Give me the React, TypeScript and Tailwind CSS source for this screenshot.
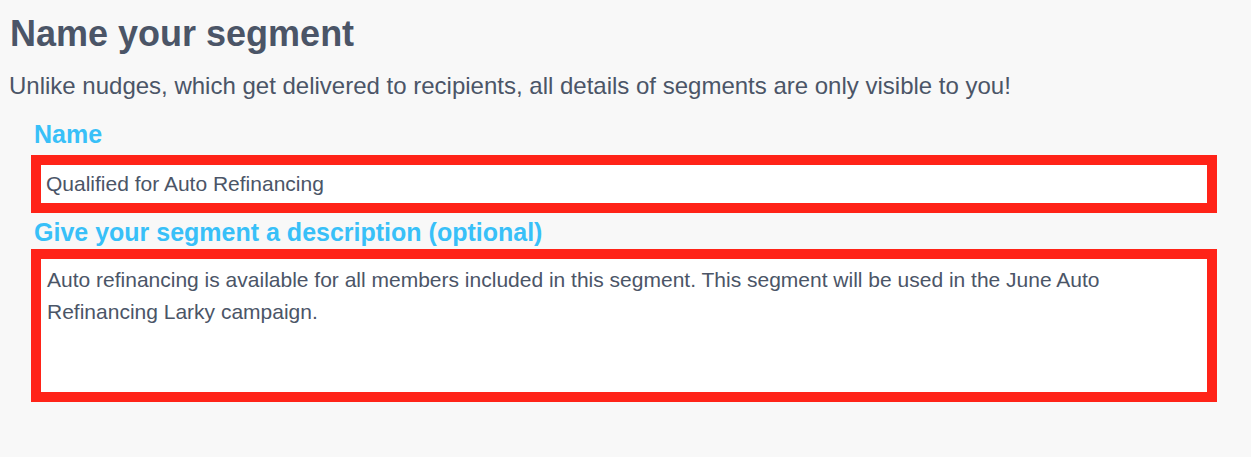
import React from "react";

const font = { fontFamily: '"Liberation Sans", Arial, Helvetica, sans-serif' };

export default function App() {
  return (
    <div className="min-h-[457px] w-full bg-[#f8f8f8] pl-[9px] pr-[34px] pt-[12px] text-[#4b5567]" style={font}>
      <h1 className="pl-[1px] text-[36px] font-bold leading-[44px] text-[#4b5567]">Name your segment</h1>
      <p className="mt-[14px] text-[24px] leading-[32px]">
        Unlike nudges, which get delivered to recipients, all details of segments are only visible to you!
      </p>

      <form className="ml-[22px] mt-[16px] flex flex-col">
        <label htmlFor="segment-name" className="pl-[3px] text-[25px] font-bold leading-[32px] text-[#38c0f8]">
          Name
        </label>
        <input
          id="segment-name"
          readOnly
          value="Qualified for Auto Refinancing"
          className="mt-[5px] h-[58px] w-full border-[10px] border-[#ff2318] bg-white px-[5px] text-[21px] text-[#4b5567] outline-none"
        />

        <label htmlFor="segment-desc" className="mt-[3px] pl-[3px] text-[25px] font-bold leading-[32px] text-[#38c0f8]">
          Give your segment a description (optional)
        </label>
        <textarea
          id="segment-desc"
          readOnly
          value="Auto refinancing is available for all members included in this segment. This segment will be used in the June Auto Refinancing Larky campaign."
          className="mt-[1px] h-[153px] w-full resize-none border-[10px] border-[#ff2318] bg-white px-[6px] pt-[5px] text-[21px] leading-[32px] text-[#4b5567] outline-none"
        />
      </form>
    </div>
  );
}
